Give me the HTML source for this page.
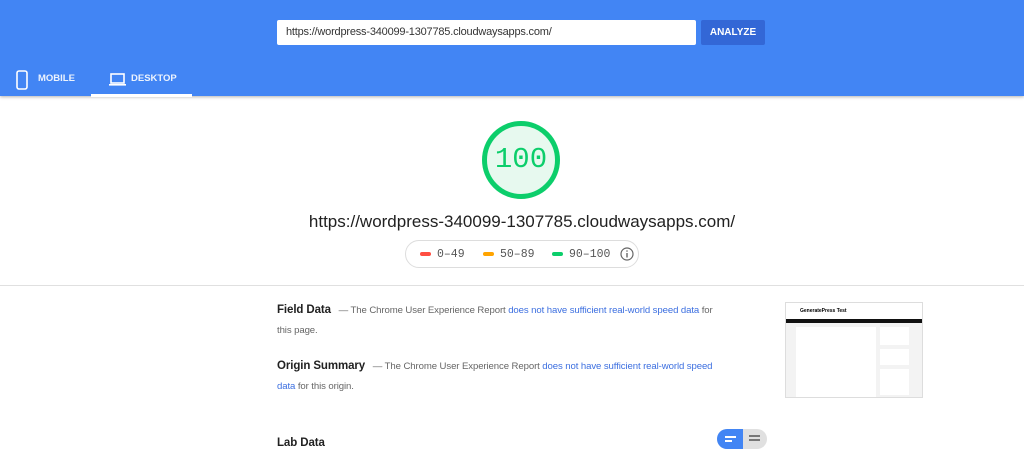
<!DOCTYPE html>
<html><head><style>
*{margin:0;padding:0;box-sizing:border-box}
body{width:1024px;height:444px;overflow:hidden;background:#fff;font-family:"Liberation Sans",sans-serif;position:relative}
.hdr{position:absolute;left:0;top:0;width:1024px;height:96px;background:#4285f4;box-shadow:0 1px 3px rgba(0,0,0,.3)}
.inp{position:absolute;left:277px;top:20px;width:419px;height:25px;background:#fff;border-radius:2px;font-size:11px;color:#333;padding:6px 9px;letter-spacing:-.2px}
.btn{position:absolute;left:701px;top:20px;width:64px;height:25px;background:#3367d6;color:#fff;font-size:10px;font-weight:bold;text-align:center;line-height:25px;border-radius:2px}
.tab{position:absolute;top:73px;color:#fff;font-size:9.5px;font-weight:bold;opacity:.9}
.ul{position:absolute;left:91px;top:94px;width:101px;height:3px;background:#fff}
.abs{position:absolute}
.leg{position:absolute;left:405px;top:240px;width:234px;height:28px;border:1px solid #ddd;border-radius:14px;font-family:"Liberation Mono",monospace;font-size:11.5px;color:#555}
.bar{display:inline-block;width:11px;height:4px;border-radius:2px;vertical-align:middle;margin-right:6px}
.txt{font-size:9.6px;color:#666;line-height:20px;letter-spacing:-.1px}
.txt b{color:#212121;font-size:11.5px}
.txt a{color:#3c6fe0}
</style></head><body>
<div class="hdr">
<div class="inp">https://wordpress-340099-1307785.cloudwaysapps.com/</div>
<div class="btn">ANALYZE</div>
<svg class="abs" style="left:16px;top:70px" width="12" height="20"><rect x="1" y="1" width="10" height="18" rx="2" fill="none" stroke="#fff" stroke-width="1.6"/></svg>
<div class="tab" style="left:38px">MOBILE</div>
<svg class="abs" style="left:109px;top:73px" width="17" height="13"><rect x="2" y="1" width="13" height="9" fill="none" stroke="#fff" stroke-width="1.6"/><rect x="0" y="11" width="17" height="1.6" fill="#fff"/></svg>
<div class="tab" style="left:131px">DESKTOP</div>
<div class="ul"></div>
</div>
<div class="abs" style="left:482px;top:121px;width:78px;height:78px;border-radius:50%;border:5px solid #0cce6b;background:#e7f9ef;color:#0cce6b;font-family:'Liberation Mono',monospace;font-size:29px;text-align:center;line-height:68px">100</div>
<div class="abs" style="left:0;width:1044px;top:212px;text-align:center;font-size:17px;color:#212121">https://wordpress-340099-1307785.cloudwaysapps.com/</div>
<div class="leg">
<span class="abs" style="left:14px;top:7px"><span class="bar" style="background:#ff4e42"></span>0–49</span>
<span class="abs" style="left:77px;top:7px"><span class="bar" style="background:#ffa400"></span>50–89</span>
<span class="abs" style="left:146px;top:7px"><span class="bar" style="background:#0cce6b"></span>90–100</span>
<svg class="abs" style="left:214px;top:6px" width="14" height="14"><circle cx="7" cy="7" r="6" fill="none" stroke="#666" stroke-width="1.2"/><rect x="6.3" y="6" width="1.4" height="4.5" fill="#666"/><circle cx="7" cy="4" r=".8" fill="#666"/></svg>
</div>
<div class="abs" style="left:0;top:285px;width:1024px;height:1px;background:#e0e0e0"></div>
<div class="abs txt" style="left:277px;top:300px;width:450px"><b>Field Data</b> &nbsp; — The Chrome User Experience Report <a>does not have sufficient real-world speed data</a> for<br>this page.</div>
<div class="abs txt" style="left:277px;top:356px;width:448px"><b>Origin Summary</b> &nbsp; — The Chrome User Experience Report <a>does not have sufficient real-world speed</a><br><a>data</a> for this origin.</div>
<div class="abs" style="left:785px;top:302px;width:138px;height:96px;border:1px solid #ddd;background:#f3f3f3">
<div style="background:#fff;height:16px;font-size:5px;font-weight:bold;padding:5px 0 0 14px">GeneratePress Test</div>
<div style="background:#111;height:4px"></div>
<div class="abs" style="left:10px;top:24px;width:80px;height:70px;background:#fff"></div>
<div class="abs" style="left:94px;top:24px;width:29px;height:18px;background:#fff"></div>
<div class="abs" style="left:94px;top:46px;width:29px;height:16px;background:#fff"></div>
<div class="abs" style="left:94px;top:66px;width:29px;height:26px;background:#fff"></div>
</div>
<div class="abs txt" style="left:277px;top:433px"><b>Lab Data</b></div>
<div class="abs" style="left:717px;top:429px;width:50px;height:20px;border-radius:10px;background:#e0e0e0;overflow:hidden"><div style="width:26px;height:20px;background:#4285f4"></div>
<div class="abs" style="left:8px;top:7px;width:11px;height:2px;background:#fff"></div><div class="abs" style="left:8px;top:11px;width:7px;height:2px;background:#fff"></div>
<div class="abs" style="left:32px;top:6px;width:11px;height:1.5px;background:#777"></div><div class="abs" style="left:32px;top:10px;width:11px;height:1.5px;background:#777"></div></div>
</body></html>
